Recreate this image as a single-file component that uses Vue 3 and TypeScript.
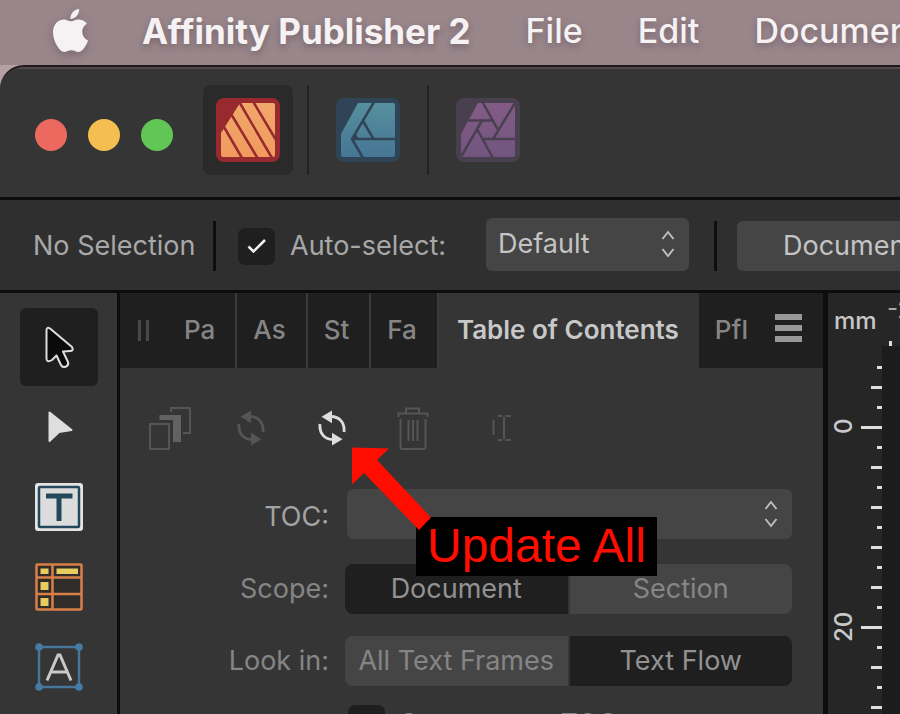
<script setup lang="ts">
import { computed, ref } from 'vue'

interface Tick {
  y: number
  length: number
}

const menus = ['File', 'Edit', 'Document']
const leftTabs = ['Pa', 'As', 'St', 'Fa']

const autoSelect = ref(true)
const stopAtNext = ref(false)
const scope = ref('Document')
const lookIn = ref('Text Flow')

const rulerZero = 133
const ticks = computed<Tick[]>(() => {
  const list: Tick[] = []
  for (let step = -3; step <= 60; step++) {
    const length = step % 10 === 0 ? 21 : step % 2 === 0 ? 11 : 5
    list.push({ y: rulerZero + step * 20, length })
  }
  return list
})
</script>

<template>
  <div class="desktop">
    <nav class="menubar" aria-label="Application menu">
      <a href="#" class="apple" aria-label="Apple menu">
        <svg viewBox="0 0 24 24" width="43" height="43">
          <path
            fill="currentColor"
            d="M12.152 6.896c-.948 0-2.415-1.078-3.96-1.04-2.04.027-3.91 1.183-4.961 3.014-2.117 3.675-.546 9.103 1.519 12.09 1.013 1.454 2.208 3.09 3.792 3.039 1.52-.065 2.09-.987 3.935-.987 1.831 0 2.35.987 3.96.948 1.637-.026 2.676-1.48 3.676-2.948 1.156-1.688 1.636-3.325 1.662-3.415-.039-.013-3.182-1.221-3.22-4.857-.026-3.04 2.48-4.494 2.597-4.559-1.429-2.09-3.623-2.324-4.39-2.376-2-.156-3.675 1.09-4.61 1.09zM15.53 3.83c.843-1.012 1.4-2.427 1.245-3.83-1.207.052-2.662.805-3.532 1.818-.78.896-1.454 2.338-1.273 3.714 1.338.104 2.715-.688 3.559-1.701"
          />
        </svg>
      </a>
      <a href="#" class="app-name">Affinity Publisher 2</a>
      <a v-for="menu in menus" :key="menu" href="#" class="menu">{{ menu }}</a>
    </nav>

    <div class="window">
      <header class="titlebar">
        <div class="lights">
          <button class="light close" aria-label="Close"></button>
          <button class="light minimise" aria-label="Minimise"></button>
          <button class="light zoom" aria-label="Zoom"></button>
        </div>
        <div class="personas">
          <button class="persona active" aria-label="Publisher">
            <svg viewBox="0 0 64 64" width="64" height="64">
              <defs>
                <linearGradient id="pub" x1="0" y1="0" x2="0" y2="1">
                  <stop offset="0" stop-color="#f0a86b" />
                  <stop offset="1" stop-color="#f19a5d" />
                </linearGradient>
              </defs>
              <rect width="64" height="64" rx="8" fill="#98292f" />
              <path d="M24 5H57a2 2 0 0 1 2 2V57a2 2 0 0 1-2 2H7a2 2 0 0 1-2-2V35Z" fill="url(#pub)" />
              <path d="M8 29 26 60M14.500 15 41.500 60M23 3.500 56 60M37 3.500 60 42" stroke="#98292f" stroke-width="2.500" />
            </svg>
          </button>
          <span class="persona-rule"></span>
          <button class="persona" aria-label="Designer">
            <svg viewBox="0 0 64 64" width="64" height="64">
              <defs>
                <linearGradient id="des" x1="0" y1="0" x2="0" y2="1">
                  <stop offset="0" stop-color="#568f9e" />
                  <stop offset="1" stop-color="#477694" />
                </linearGradient>
              </defs>
              <rect width="64" height="64" rx="8" fill="#304457" />
              <path d="M22 5H57a2 2 0 0 1 2 2V57a2 2 0 0 1-2 2H7a2 2 0 0 1-2-2V36Z" fill="url(#des)" />
              <path d="M38 4 16 41 27 60M16 41H60M27 23 37.500 41" fill="none" stroke="#304457" stroke-width="2.500" />
              <path d="M16 41 20 34Q20 39 24 41Z" fill="#304457" />
            </svg>
          </button>
          <span class="persona-rule"></span>
          <button class="persona" aria-label="Photo">
            <svg viewBox="0 0 64 64" width="64" height="64">
              <defs>
                <linearGradient id="pho" x1="0" y1="0" x2="0" y2="1">
                  <stop offset="0" stop-color="#835c86" />
                  <stop offset="1" stop-color="#72557f" />
                </linearGradient>
              </defs>
              <rect width="64" height="64" rx="8" fill="#49404f" />
              <path d="M22 5H57a2 2 0 0 1 2 2V57a2 2 0 0 1-2 2H7a2 2 0 0 1-2-2V36Z" fill="url(#pho)" />
              <path
                d="M12 22.500H36M26.500 4 41.500 31M59 5 37 41M60 41H27M37 60 21.500 32M5.500 58 26 22.500"
                fill="none"
                stroke="#49404f"
                stroke-width="2.500"
              />
            </svg>
          </button>
        </div>
      </header>

      <div class="context">
        <span class="selection">No Selection</span>
        <span class="rule"></span>
        <label class="check">
          <span class="box-wrap">
            <input v-model="autoSelect" type="checkbox" class="box" />
            <svg v-if="autoSelect" viewBox="0 0 37 37" width="37" height="37" class="mark">
              <path d="M10.500 18.500 15.500 23.500 27 12" />
            </svg>
          </span>
          <span>Auto-select:</span>
        </label>
        <span class="select-wrap auto">
          <select class="select" aria-label="Auto-select mode">
            <option>Default</option>
          </select>
          <svg viewBox="0 0 14 28" width="14" height="28" class="chevrons">
            <path d="M1.500 9 7 2 12.500 9M1.500 19 7 26 12.500 19" />
          </svg>
        </span>
        <span class="rule"></span>
        <button class="setup">Document Setup</button>
      </div>

      <main class="work">
        <aside class="tools">
          <button class="tool active" aria-label="Move Tool">
            <svg viewBox="0 0 48 48" width="48" height="48">
              <path
                d="M11.500 7.500Q11.500 3.500 15 5.500L37 24Q39 28 35 28L28 28.500 33 39Q34 42 31 43.500 27.500 45 26 42L21.500 32.500 17 37Q12 40 11.500 36Z"
                fill="#0a0a0a"
                stroke="#dedede"
                stroke-width="2"
                stroke-linejoin="round"
              />
            </svg>
          </button>
          <button class="tool" aria-label="Node Tool">
            <svg viewBox="0 0 48 48" width="48" height="48">
              <path d="M14.500 9.500 36.500 27 24 29 14.500 38Z" fill="#dedede" stroke="#dedede" stroke-width="2" stroke-linejoin="round" />
            </svg>
          </button>
          <button class="tool" aria-label="Frame Text Tool">
            <svg viewBox="0 0 48 48" width="48" height="48">
              <rect width="48" height="48" rx="3" fill="#e4e4e4" />
              <rect x="4" y="4" width="40" height="40" rx="1" fill="#dcdcdc" stroke="#23485c" stroke-width="2.500" />
              <path d="M11 10.500H37.500V15.500H26.500V38H21.500V15.500H11Z" fill="#23485c" />
            </svg>
          </button>
          <button class="tool" aria-label="Table Tool">
            <svg viewBox="0 0 48 48" width="48" height="48">
              <rect x="1.500" y="1.500" width="45" height="45" rx="1" fill="#2f2c2a" stroke="#d98048" stroke-width="2.500" />
              <path d="M17.500 1V47M1 14.500H47M1 31H47" stroke="#d98048" stroke-width="2.500" />
              <path d="M5.500 5.500H13.500V11H5.500ZM21.500 5.500H43V11H21.500ZM5.500 19H13.500V27H5.500ZM5.500 35H13.500V43H5.500Z" fill="#e8cc60" />
            </svg>
          </button>
          <button class="tool" aria-label="Artistic Text Tool">
            <svg viewBox="0 0 48 48" width="48" height="48">
              <rect x="4" y="4" width="40" height="40" fill="none" stroke="#467699" stroke-width="2.500" />
              <g fill="#467ba3">
                <circle cx="4" cy="4" r="3.800" />
                <circle cx="44" cy="4" r="3.800" />
                <circle cx="4" cy="44" r="3.800" />
                <circle cx="44" cy="44" r="3.800" />
              </g>
              <path d="M12 37.500 23 12H25L36 37.500M16.500 29H31.500" fill="none" stroke="#c9c9c9" stroke-width="3" />
            </svg>
          </button>
        </aside>

        <section class="panel">
          <div class="tabs" role="tablist">
            <span class="grip"></span>
            <button v-for="tab in leftTabs" :key="tab" class="tab" role="tab">{{ tab }}</button>
            <button class="tab current" role="tab" aria-selected="true">Table of Contents</button>
            <div class="tab-end">
              <button class="tab last" role="tab">Pfl</button>
              <button class="burger" aria-label="Panel menu"><i></i><i></i><i></i></button>
            </div>
          </div>

          <div class="actions">
            <button class="action" aria-label="Insert table of contents">
              <svg viewBox="0 0 44 44" width="44" height="44" fill="none" stroke="#555" stroke-width="2">
                <path d="M2 18H21V43H2Z" />
                <path d="M23 6V2H42V27H35" />
                <path d="M11.500 9H33V36H25V14H11.500Z" fill="#626262" stroke="none" />
              </svg>
            </button>
            <button class="action dim" aria-label="Update">
              <svg viewBox="0 0 28 36" width="28" height="36">
                <g id="half">
                  <path d="M3.500 6.800 14 .5V13.200Z" fill="currentColor" />
                  <path d="M13 6.500C21 6.500 27 12.500 26 22" fill="none" stroke="currentColor" stroke-width="2.800" />
                </g>
                <use href="#half" transform="rotate(180 14 18)" />
              </svg>
            </button>
            <button class="action bright" aria-label="Update All">
              <svg viewBox="0 0 28 36" width="28" height="36">
                <use href="#half" />
                <use href="#half" transform="rotate(180 14 18)" />
              </svg>
            </button>
            <button class="action dim" aria-label="Remove">
              <svg viewBox="0 0 32 44" width="32" height="44" fill="none" stroke="currentColor" stroke-width="2">
                <path d="M1.500 11V7.500H30.500V11M9 7V2.500H22V7M3.500 13V41Q3.500 43 5.500 43H26.500Q28.500 43 28.500 41V13M11.500 14V35M16 14V35M20.500 14V35" />
              </svg>
            </button>
            <button class="action dim rename" aria-label="Rename">
              <svg viewBox="0 0 20 28" width="20" height="28" fill="none" stroke="currentColor" stroke-width="2">
                <path d="M1.500 6V21M12 3V25M6 2H10.500M13.500 2H19M6 26H10.500M13.500 26H19" />
              </svg>
            </button>
          </div>

          <form class="form" @submit.prevent>
            <label for="toc" class="label strong">TOC:</label>
            <span class="select-wrap toc">
              <select id="toc" class="select">
                <option></option>
              </select>
              <svg viewBox="0 0 14 28" width="14" height="28" class="chevrons">
                <path d="M1.500 9 7 2 12.500 9M1.500 19 7 26 12.500 19" />
              </svg>
            </span>

            <span id="scope-label" class="label">Scope:</span>
            <div class="segments" role="group" aria-labelledby="scope-label">
              <button
                v-for="item in ['Document', 'Section']"
                :key="item"
                type="button"
                class="segment"
                :class="{ on: scope === item }"
                @click="scope = item"
              >
                {{ item }}
              </button>
            </div>

            <span id="look-label" class="label">Look in:</span>
            <div class="segments" role="group" aria-labelledby="look-label">
              <button
                v-for="item in ['All Text Frames', 'Text Flow']"
                :key="item"
                type="button"
                class="segment"
                :class="{ on: lookIn === item }"
                @click="lookIn = item"
              >
                {{ item }}
              </button>
            </div>

            <label class="check stop">
              <span class="box-wrap"><input v-model="stopAtNext" type="checkbox" class="box" /></span>
              <span>Stop at next TOC</span>
            </label>
          </form>

          <div class="callout">
            <span class="callout-text">Update All</span>
            <svg viewBox="0 0 80 84" width="80" height="84" class="arrow">
              <path d="M0 .5 37 1.500 25 13 79 70.500 67 83 12 26 0 37.500Z" fill="#ff0d00" />
            </svg>
          </div>
        </section>

        <section class="canvas">
          <div class="ruler-top">
            <span class="unit">mm</span>
            <span class="clipped">-20</span>
            <span class="top-tick"></span>
          </div>
          <svg class="ruler" width="54" height="100%">
            <rect
              v-for="tick in ticks"
              :key="tick.y"
              :x="54 - tick.length"
              :y="tick.y - 53"
              :width="tick.length"
              height="3"
            />
            <text transform="translate(24 88) rotate(-90)">0</text>
            <text transform="translate(24 296) rotate(-90)">20</text>
          </svg>
        </section>
      </main>
    </div>
  </div>
</template>

<style>
body {
  margin: 0;
  background: #98868b;
}
</style>

<style scoped>
* {
  box-sizing: border-box;
}

.desktop {
  display: flex;
  flex-direction: column;
  height: 100vh;
  overflow: hidden;
  background: #b5a1a5;
  color: #a8a8a8;
  font-family: Inter, 'Liberation Sans', sans-serif;
  font-size: 27px;
  line-height: 32px;
  white-space: nowrap;
}

button,
select,
input {
  margin: 0;
  padding: 0;
  border: 0;
  background: none;
  color: inherit;
  font: inherit;
  appearance: none;
}

svg {
  display: block;
  flex: none;
}

.menubar {
  display: flex;
  flex: none;
  align-items: center;
  height: 65px;
  padding: 0 0 4px 49px;
  background: #98868b;
  font-size: 34px;
  overflow: hidden;
}

.menubar a {
  flex: none;
  color: #f6f2f3;
  text-decoration: none;
  text-shadow: 0 3px 6px rgba(60, 40, 50, 0.35);
}

.apple {
  margin-right: 50px;
  filter: drop-shadow(0 3px 4px rgba(60, 40, 50, 0.3));
}

.menubar .app-name {
  font-size: 35px;
  font-weight: 700;
}

.menubar .menu {
  margin-left: 55px;
  font-weight: 500;
}

.window {
  display: flex;
  flex: 1;
  flex-direction: column;
  min-height: 0;
  border-top: 2px solid #211819;
  border-radius: 24px 0 0 0;
  background: #353535;
  overflow: hidden;
}

.titlebar {
  display: flex;
  flex: none;
  align-items: center;
  gap: 30px;
  height: 133px;
  padding: 0 0 6px 35px;
  border-top: 2px solid #54494a;
  border-bottom: 3px solid #0d0d0d;
}

.lights {
  display: flex;
  gap: 21px;
  padding-top: 10px;
}

.light {
  width: 32px;
  height: 32px;
  border-radius: 50%;
}

.close {
  background: #ec695f;
}

.minimise {
  background: #f4bf50;
}

.zoom {
  background: #62c656;
}

.personas {
  display: flex;
  gap: 14px;
}

.persona {
  display: grid;
  place-items: center;
  width: 90px;
  height: 90px;
  border-radius: 8px;
}

.persona.active {
  background: #2a2a2a;
}

.persona-rule {
  width: 2px;
  background: #222;
}

.context {
  display: flex;
  flex: none;
  align-items: center;
  height: 93px;
  padding: 2px 0 0 33px;
  border-bottom: 3px solid #0d0d0d;
  background: #2f2f2f;
}

.selection {
  flex: 0 0 180px;
}

.rule {
  flex: none;
  width: 3px;
  height: 50px;
  background: #0d0d0d;
}

.check {
  display: flex;
  align-items: center;
  gap: 15px;
}

.context .check {
  flex: 0 0 248px;
  margin-left: 22px;
}

.box-wrap {
  display: grid;
  flex: none;
}

.box {
  grid-area: 1 / 1;
  width: 37px;
  height: 37px;
  border-radius: 7px;
  background: #1f1f1f;
}

.mark {
  grid-area: 1 / 1;
  fill: none;
  stroke: #f0f0f0;
  stroke-width: 2.5;
  pointer-events: none;
}

.select-wrap {
  display: grid;
  align-items: center;
}

.select {
  grid-area: 1 / 1;
  width: 100%;
  height: 50px;
  padding-left: 12px;
  border-radius: 6px;
  background: #454545;
  color: #c4c4c4;
}

.chevrons {
  grid-area: 1 / 1;
  justify-self: end;
  margin-right: 14px;
  fill: none;
  stroke: #bdbdbd;
  stroke-width: 2;
  pointer-events: none;
}

.auto {
  flex: 0 0 203px;
  margin: 0 25px 4px 0;
}

.auto .select {
  height: 53px;
}

.setup {
  flex: none;
  height: 50px;
  margin-left: 20px;
  padding: 0 46px;
  border-radius: 6px;
  background: #454545;
  color: #c4c4c4;
}

.work {
  display: flex;
  flex: 1;
  min-height: 0;
}

.tools {
  display: flex;
  flex: 0 0 120px;
  flex-direction: column;
  align-items: center;
  gap: 2px;
  padding-top: 15px;
  border-right: 3px solid #0d0d0d;
}

.tool {
  display: grid;
  flex: none;
  place-items: center;
  width: 78px;
  height: 78px;
  border-radius: 6px;
}

.tool svg {
  overflow: visible;
}

.tool.active {
  background: #1f1f1f;
}

.panel {
  position: relative;
  flex: 1;
  min-width: 0;
  border-right: 5px solid #0d0d0d;
}

.tabs {
  display: flex;
  height: 75px;
  color: #858585;
  font-size: 26px;
  font-weight: 500;
}

.grip {
  flex: 0 0 48px;
  background:
    linear-gradient(#484848, #484848) 18px 27px / 3px 21px no-repeat,
    linear-gradient(#484848, #484848) 26px 27px / 3px 21px no-repeat,
    #1f1f1f;
}

.tab {
  flex: none;
  padding: 0 20px 2px 16px;
  border-right: 2px solid #3a3a3a;
  background: #1f1f1f;
}

.tab.current {
  padding-left: 18px;
  border: 0;
  background: none;
  color: #c8c8c8;
  font-weight: 600;
}

.tab-end {
  display: flex;
  flex: 1;
  align-items: center;
  justify-content: space-between;
  padding-right: 21px;
  background: #1f1f1f;
}

.tab.last {
  padding-right: 0;
  border: 0;
}

.burger {
  display: grid;
  gap: 5px;
  width: 27px;
  padding-bottom: 6px;
}

.burger i {
  height: 6px;
  background: #999;
}

.actions {
  display: flex;
  align-items: center;
  gap: 33px;
  height: 121px;
  padding: 0 0 2px 26px;
}

.action {
  display: grid;
  place-items: center;
  width: 48px;
  height: 48px;
  color: #555;
}

.action.bright {
  color: #dedede;
}

.action.rename {
  margin-left: 8px;
}

.form {
  display: grid;
  grid-template-columns: 209px 1fr;
  column-gap: 16px;
  align-items: center;
  padding-right: 31px;
  color: #858585;
}

.label {
  text-align: right;
}

.label.strong {
  color: #a3a3a3;
}

.toc {
  margin: 0 0 25px 2px;
}

.label.strong {
  margin-bottom: 20px;
}

.segments {
  display: grid;
  grid-template-columns: 1fr 1fr;
  gap: 2px;
  margin-bottom: 22px;
  border-radius: 8px;
  overflow: hidden;
}

.segments + .label,
.toc + .label {
  margin-bottom: 22px;
}

.segment {
  height: 50px;
  background: #454545;
}

.segment.on {
  background: #1f1f1f;
  color: #929292;
}

.stop {
  grid-column: 2;
  margin: -3px 0 0 3px;
}

.callout {
  position: absolute;
  top: 224px;
  left: 296px;
}

.callout-text {
  display: block;
  padding: 0 11px 2px;
  background: #000;
  color: #ff0d00;
  font-family: 'Liberation Sans', Arial, sans-serif;
  font-size: 48px;
  line-height: 57px;
}

.arrow {
  position: absolute;
  top: -70px;
  left: -64px;
}

.canvas {
  display: flex;
  flex: 0 0 72px;
  flex-direction: column;
  background: #1c1c1c;
  overflow: hidden;
}

.ruler-top {
  position: relative;
  flex: 0 0 53px;
  background: #262626;
}

.unit {
  display: block;
  padding: 12px 0 0 6px;
  color: #c8c8c8;
  font-size: 24px;
  font-weight: 500;
}

.clipped {
  position: absolute;
  top: 1px;
  left: 59px;
  color: #a8a8a8;
  font-size: 24px;
}

.top-tick {
  position: absolute;
  bottom: 0;
  left: 61px;
  width: 3px;
  height: 5px;
  background: #dedede;
}

.ruler {
  flex: 1;
  background: #262626;
  fill: #dedede;
}

.ruler text {
  fill: #c8c8c8;
  font-size: 24px;
  font-weight: 500;
}
</style>
